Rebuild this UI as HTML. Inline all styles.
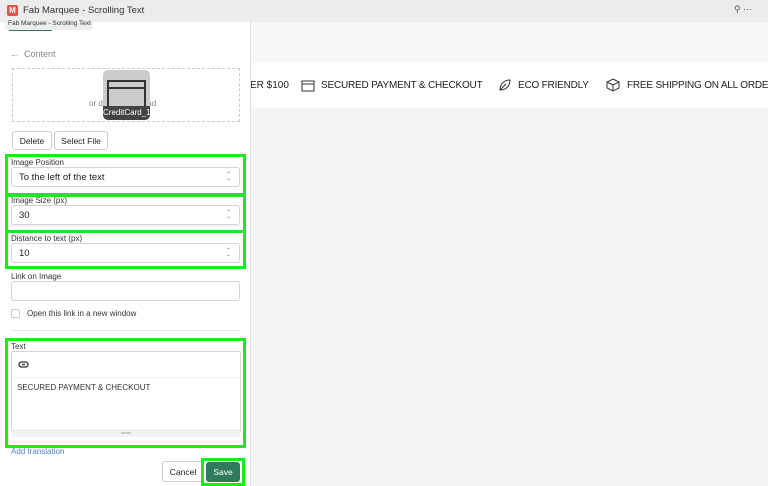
<!DOCTYPE html><html><head><style>
*{box-sizing:border-box;margin:0;padding:0}
body{width:768px;height:486px;overflow:hidden;background:#f4f6f6;font-family:"Liberation Sans",sans-serif;font-size:9px;color:#222;position:relative}
.a{position:absolute}
.top{left:0;top:0;width:768px;height:22px;background:#ececec}
.side{left:0;top:22px;width:251px;height:464px;background:#fff;border-right:1px solid #e2e2e2}
.inp{position:absolute;left:11px;width:229px;height:20px;border:1px solid #d5d5d5;border-radius:3px;background:#fff;font-size:9.5px;padding:4px 7px;color:#222}
.lbl{position:absolute;left:11px;font-size:8px;color:#333}
.g{position:absolute;border:3px solid #1ee81e}
.btn{position:absolute;border:1px solid #ccc;border-radius:3px;background:#fff;font-size:8.5px;text-align:center;line-height:18px}
.ar{position:absolute;right:8px;top:5px;font-size:6px;color:#777;line-height:4px}
.bt{position:absolute;top:80px;font-size:10px;white-space:nowrap;color:#222}
</style></head><body>
<div class="a top"></div>
<div class="a" style="left:7px;top:5px;width:11px;height:11px;background:#e4504a;border-radius:2px;color:#fff;font-size:8px;font-weight:bold;text-align:center;line-height:11px">M</div>
<div class="a" style="left:23px;top:5px;font-size:9.5px;color:#333">Fab Marquee - Scrolling Text</div>
<div class="a" style="left:734px;top:4px;font-size:9px;color:#555">⚲ ⋯</div>
<div class="a" style="left:252px;top:22px;width:516px;height:40px;background:#f6f7f7"></div>
<div class="a" style="left:252px;top:62px;width:516px;height:46px;background:#fff"></div>
<div class="bt" style="left:250px">ER $100</div>
<svg class="a" style="left:301px;top:80px" width="14" height="12" viewBox="0 0 14 12"><rect x="1" y="1" width="12" height="10" fill="none" stroke="#333"/><line x1="1" y1="4" x2="13" y2="4" stroke="#333"/></svg>
<div class="bt" style="left:321px;letter-spacing:-0.2px">SECURED PAYMENT &amp; CHECKOUT</div>
<svg class="a" style="left:498px;top:78px" width="14" height="14" viewBox="0 0 14 14"><path d="M2 12C2 6 6 2 12 2C12 8 8 12 2 12ZM2 12L8 6" fill="none" stroke="#333"/></svg>
<div class="bt" style="left:518px;letter-spacing:-0.2px">ECO FRIENDLY</div>
<svg class="a" style="left:606px;top:78px" width="14" height="14" viewBox="0 0 14 14"><path d="M7 1L13 4V10L7 13L1 10V4ZM1 4L7 7L13 4M7 7V13" fill="none" stroke="#333"/></svg>
<div class="bt" style="left:627px;letter-spacing:-0.2px">FREE SHIPPING ON ALL ORDE</div>
<div class="a side"></div>
<div class="a" style="left:5px;top:17px;width:88px;height:13px;background:#eee;font-size:6.5px;padding:3px 3px;color:#333;border-radius:2px;white-space:nowrap;overflow:hidden">Fab Marquee - Scrolling Text</div>
<div class="a" style="left:9px;top:30px;width:43px;height:1px;background:#2d7a5a"></div>
<div class="a" style="left:10px;top:49px;font-size:9px;color:#888">← &nbsp;Content</div>
<div class="a" style="left:12px;top:68px;width:228px;height:54px;border:1px dashed #ccc"></div>
<div class="a" style="left:89px;top:99px;font-size:8px;color:#888">or d&nbsp;&nbsp;&nbsp;&nbsp;&nbsp;&nbsp;&nbsp;&nbsp;&nbsp;&nbsp;&nbsp;&nbsp;&nbsp;&nbsp;&nbsp;&nbsp;&nbsp;&nbsp;oad</div>
<div class="a" style="left:103px;top:70px;width:47px;height:50px;background:#ccc;border-radius:5px;overflow:hidden">
<div class="a" style="left:4px;top:10px;width:39px;height:28px;border:2px solid #333"></div>
<div class="a" style="left:4px;top:17px;width:39px;height:2px;background:#333"></div>
<div class="a" style="left:0;top:36px;width:47px;height:14px;background:#444;color:#fff;font-size:8px;padding-top:2px;white-space:nowrap">CreditCard_16</div></div>
<div class="btn" style="left:12px;top:131px;width:40px;height:19px">Delete</div>
<div class="btn" style="left:54px;top:131px;width:54px;height:19px">Select File</div>
<div class="lbl" style="top:158px">Image Position</div>
<div class="inp" style="top:167px">To the left of the text<span class="ar">⌃<br>⌄</span></div>
<div class="lbl" style="top:196px">Image Size (px)</div>
<div class="inp" style="top:205px">30<span class="ar">⌃<br>⌄</span></div>
<div class="lbl" style="top:234px">Distance to text (px)</div>
<div class="inp" style="top:243px">10<span class="ar">⌃<br>⌄</span></div>
<div class="lbl" style="top:272px">Link on Image</div>
<div class="inp" style="top:281px"></div>
<div class="a" style="left:11px;top:309px;width:9px;height:9px;border:1px solid #ccc;border-radius:2px"></div>
<div class="a" style="left:27px;top:309px;font-size:8px;color:#333">Open this link in a new window</div>
<div class="a" style="left:11px;top:330px;width:229px;height:1px;background:#e5e5e5"></div>
<div class="lbl" style="top:342px">Text</div>
<div class="a" style="left:11px;top:351px;width:230px;height:81px;border:1px solid #d5d5d5;border-radius:2px"></div>
<div class="a" style="left:12px;top:377px;width:228px;height:1px;background:#eee"></div>
<svg class="a" style="left:18px;top:361px" width="11" height="7" viewBox="0 0 11 7"><rect x="1" y="1" width="9" height="5" rx="2.5" fill="none" stroke="#333" stroke-width="1.3"/><line x1="4" y1="3.5" x2="7" y2="3.5" stroke="#333" stroke-width="1.3"/></svg>
<div class="a" style="left:17px;top:383px;font-size:8px;color:#333">SECURED PAYMENT &amp; CHECKOUT</div>
<div class="a" style="left:12px;top:430px;width:228px;height:7px;background:#f3f3f3;border-top:1px solid #e5e5e5"></div>
<div class="a" style="left:121px;top:432px;width:10px;height:2px;background:#ccc"></div>
<div class="a" style="left:11px;top:447px;font-size:8px;color:#4a86c5">Add translation</div>
<div class="btn" style="left:162px;top:461px;width:42px;height:21px;line-height:20px">Cancel</div>
<div class="btn" style="left:206px;top:462px;width:34px;height:20px;background:#2f7c5c;color:#fff;border-color:#2f7c5c">Save</div>
<div class="g" style="left:5px;top:154px;width:241px;height:43px"></div>
<div class="g" style="left:5px;top:193px;width:241px;height:40px"></div>
<div class="g" style="left:5px;top:230px;width:241px;height:39px"></div>
<div class="g" style="left:5px;top:338px;width:241px;height:110px"></div>
<div class="g" style="left:201px;top:458px;width:44px;height:28px"></div>
</body></html>
